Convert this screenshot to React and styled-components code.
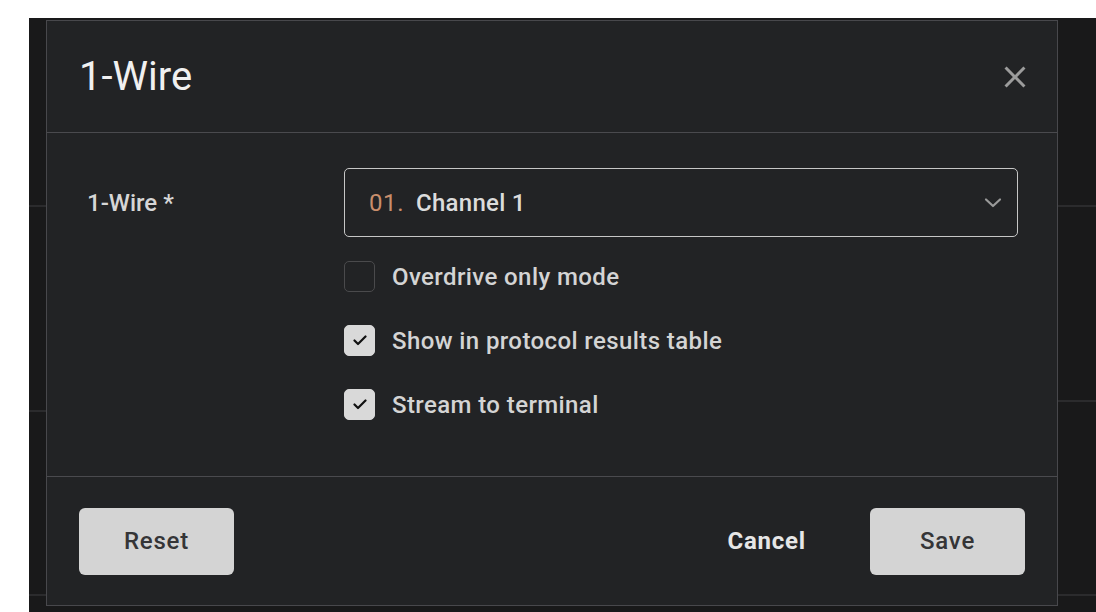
import React from 'react';
import styled, { createGlobalStyle } from 'styled-components';

const GlobalStyle = createGlobalStyle`
  * { box-sizing: border-box; }
  html, body {
    margin: 0;
    padding: 0;
    background: #ffffff;
    font-family: Roboto, "Liberation Sans", sans-serif;
    overflow: hidden;
  }
`;

const Page = styled.div`
  position: relative;
  margin: 18px 0 0 29px;
  height: 594px;
  background: #19191a;
  display: flex;
  overflow: hidden;
`;

const Pane = styled.div`
  flex: 1;
  display: flex;
  flex-direction: column;
`;

const PaneRow = styled.div`
  height: ${(p) => p.$h}px;
  flex-shrink: 0;
  border-bottom: 2px solid #2b2b2d;
`;

const Dialog = styled.div`
  position: absolute;
  left: 17px;
  top: 2px;
  width: 1012px;
  height: 586px;
  background: #222325;
  border: 1px solid #48484c;
  display: flex;
  flex-direction: column;
`;

const Header = styled.div`
  height: 112px;
  flex-shrink: 0;
  border-bottom: 1px solid #4a4a4e;
  display: flex;
  align-items: center;
  justify-content: space-between;
  padding: 0 24px 0 32px;
`;

const Title = styled.h2`
  margin: 0;
  font-size: 40px;
  font-weight: 400;
  color: #f0f0f0;
`;

const CloseButton = styled.button`
  width: 36px;
  height: 36px;
  padding: 0;
  border: none;
  background: transparent;
  color: #9c9c9c;
  cursor: pointer;
  display: flex;
  align-items: center;
  justify-content: center;
`;

const Body = styled.div`
  flex: 1;
  padding: 35px 39px 0 40px;
  display: grid;
  grid-template-columns: 257px 1fr;
  align-content: start;
`;

const FieldLabel = styled.div`
  height: 69px;
  display: flex;
  align-items: center;
  font-size: 24px;
  font-weight: 500;
  color: #d6d6d6;
`;

const Controls = styled.div`
  display: flex;
  flex-direction: column;
`;

const Select = styled.div`
  height: 69px;
  border: 1.5px solid #c6c6c6;
  border-radius: 5px;
  display: flex;
  align-items: center;
  padding: 0 15px 0 24px;
  font-size: 24px;
  font-weight: 500;
  letter-spacing: 0.25px;
  color: #dcdcdc;
  cursor: pointer;
`;

const OptionIndex = styled.span`
  color: #c98e6c;
  font-weight: 400;
  letter-spacing: 0.6px;
  margin-right: 12px;
`;

const OptionName = styled.span`
  flex: 1;
`;

const CheckList = styled.div`
  margin-top: 24px;
  display: flex;
  flex-direction: column;
  gap: 33px;
`;

const CheckRow = styled.label`
  display: flex;
  align-items: center;
  gap: 17px;
  font-size: 24px;
  font-weight: 500;
  letter-spacing: 0.4px;
  color: #d4d4d4;
  cursor: pointer;
`;

const Box = styled.span`
  width: 31px;
  height: 31px;
  border-radius: 5px;
  flex-shrink: 0;
  display: flex;
  align-items: center;
  justify-content: center;
  background: ${(p) => (p.$checked ? '#d9d9d9' : 'transparent')};
  border: 1.5px solid ${(p) => (p.$checked ? '#d9d9d9' : '#4a4a4c')};
`;

const Footer = styled.div`
  height: 129px;
  flex-shrink: 0;
  border-top: 1px solid #4a4a4e;
  display: flex;
  align-items: center;
  padding: 0 32px;
  gap: 26px;
`;

const Spacer = styled.div`
  flex: 1;
`;

const Button = styled.button`
  width: ${(p) => (p.$text ? 'auto' : '155px')};
  height: 67px;
  padding: 0 ${(p) => (p.$text ? '38px' : '0')};
  border: none;
  border-radius: 6px;
  background: ${(p) => (p.$text ? 'transparent' : '#d4d4d4')};
  color: ${(p) => (p.$text ? '#e6e6e6' : '#353537')};
  font-family: Roboto, "Liberation Sans", sans-serif;
  font-size: 24px;
  font-weight: ${(p) => (p.$text ? 700 : 500)};
  letter-spacing: ${(p) => (p.$text ? '0.8px' : '0.8px')};
  cursor: pointer;
`;

const CloseIcon = () => (
  <svg width="36" height="36" viewBox="0 0 24 24" fill="currentColor">
    <path d="M19 6.41L17.59 5 12 10.59 6.41 5 5 6.41 10.59 12 5 17.59 6.41 19 12 13.41 17.59 19 19 17.59 13.41 12z" />
  </svg>
);

const Chevron = () => (
  <svg width="18" height="12" viewBox="0 0 18 12" fill="none">
    <polyline points="2,2.5 9,9 16,2.5" stroke="#9a9a9a" strokeWidth="2.2" strokeLinecap="round" strokeLinejoin="round" />
  </svg>
);

const Check = () => (
  <svg width="14" height="11" viewBox="0 0 14 11" fill="none">
    <polyline points="1.5,5.5 5,9 12.5,1.5" stroke="#111" strokeWidth="2.2" strokeLinecap="round" strokeLinejoin="round" />
  </svg>
);

const options = [
  { label: 'Overdrive only mode', checked: false },
  { label: 'Show in protocol results table', checked: true },
  { label: 'Stream to terminal', checked: true },
];

export default function App() {
  return (
    <>
      <GlobalStyle />
      <Page>
        <Pane>
          <PaneRow $h={189} />
          <PaneRow $h={205} />
          <PaneRow $h={184} />
        </Pane>
        <Pane>
          <PaneRow $h={189} />
          <PaneRow $h={195} />
          <PaneRow $h={194} />
        </Pane>
        <Dialog>
          <Header>
            <Title>1-Wire</Title>
            <CloseButton aria-label="Close">
              <CloseIcon />
            </CloseButton>
          </Header>
          <Body>
            <FieldLabel>1-Wire *</FieldLabel>
            <Controls>
              <Select>
                <OptionIndex>01.</OptionIndex>
                <OptionName>Channel 1</OptionName>
                <Chevron />
              </Select>
              <CheckList>
                {options.map((o) => (
                  <CheckRow key={o.label}>
                    <Box $checked={o.checked}>{o.checked && <Check />}</Box>
                    {o.label}
                  </CheckRow>
                ))}
              </CheckList>
            </Controls>
          </Body>
          <Footer>
            <Button>Reset</Button>
            <Spacer />
            <Button $text>Cancel</Button>
            <Button>Save</Button>
          </Footer>
        </Dialog>
      </Page>
    </>
  );
}
